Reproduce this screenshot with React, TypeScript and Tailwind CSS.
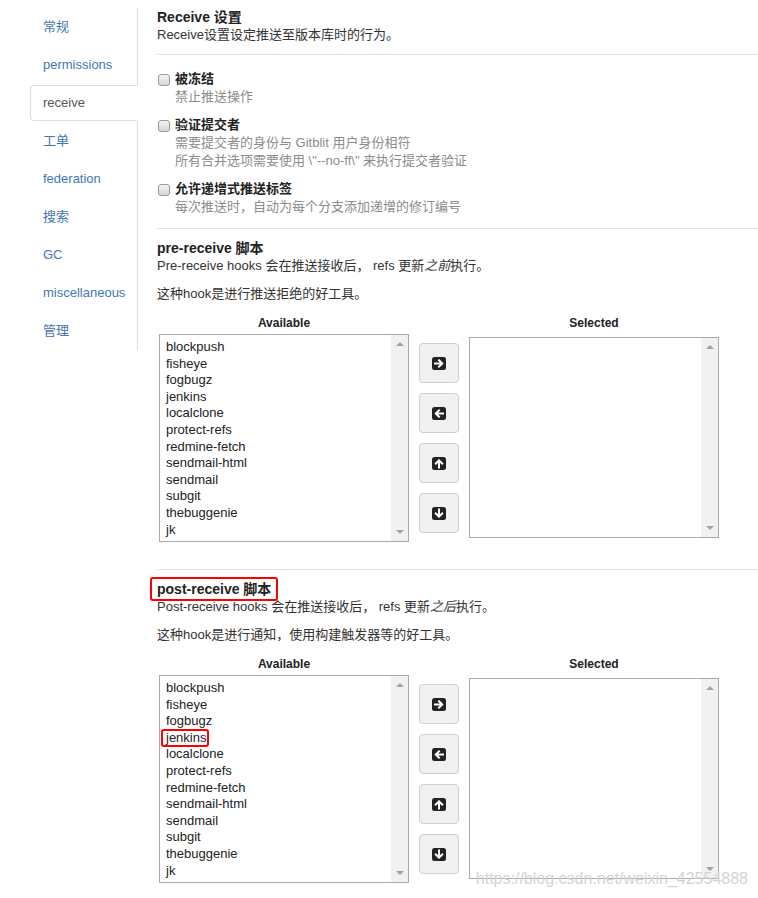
import type { ReactNode } from "react";

const navItems = ["常规", "permissions", "receive", "工单", "federation", "搜索", "GC", "miscellaneous", "管理"];

const hooks = [
  "blockpush",
  "fisheye",
  "fogbugz",
  "jenkins",
  "localclone",
  "protect-refs",
  "redmine-fetch",
  "sendmail-html",
  "sendmail",
  "subgit",
  "thebuggenie",
  "jk",
];

function Checkbox() {
  return (
    <span className="mt-[4px] mr-[5px] ml-px block h-[12px] w-[12px] shrink-0 rounded-[3px] border border-[#9a9a9a] bg-gradient-to-b from-[#f3f3f3] to-[#d6d6d6]" />
  );
}

function CheckOption({ label, children }: { label: string; children: ReactNode }) {
  return (
    <div className="flex">
      <Checkbox />
      <div>
        <div className="text-[13px] leading-[18px] font-bold text-[#222]">{label}</div>
        <div className="text-[13px] leading-[18px] text-[#8c8c8c]">{children}</div>
      </div>
    </div>
  );
}

function Scrollbar() {
  return (
    <div className="flex w-[17px] shrink-0 flex-col items-center justify-between bg-[#f1f1f1] py-[7px]">
      <span className="h-0 w-0 border-x-[4px] border-b-[4px] border-x-transparent border-b-[#a3a3a3]" />
      <span className="h-0 w-0 border-x-[4px] border-t-[4px] border-x-transparent border-t-[#a3a3a3]" />
    </div>
  );
}

function ArrowIcon({ dir }: { dir: "right" | "left" | "up" | "down" }) {
  const rot = { right: 0, down: 90, left: 180, up: 270 }[dir];
  return (
    <svg width="14" height="13" viewBox="0 0 14 13">
      <rect x="0" y="0" width="14" height="13" rx="2.5" fill="#222" />
      <g transform={`rotate(${rot} 7 6.5)`}>
        <path d="M3 6.5H10M7 3.3L10.2 6.5L7 9.7" stroke="#fff" strokeWidth="2" fill="none" strokeLinecap="square" />
      </g>
    </svg>
  );
}

function MoveButton({ dir }: { dir: "right" | "left" | "up" | "down" }) {
  return (
    <button className="flex h-[40px] w-[40px] items-center justify-center rounded-[4px] border border-[#cfcfcf] bg-[#f0f0f0]">
      <ArrowIcon dir={dir} />
    </button>
  );
}

function HookPicker({ markJenkins = false }: { markJenkins?: boolean }) {
  return (
    <div className="mt-[12px] ml-[2px] flex items-start gap-[10px]">
      <div className="w-[250px]">
        <div className="text-center text-[12px] leading-[16px] font-bold text-[#222]">Available</div>
        <div className="mt-[3px] flex h-[208px] border border-[#aaa] bg-white">
          <ul className="flex-1 pt-[4px] pl-[6px] text-[13px] leading-[16.6px] text-[#222]">
            {hooks.map((h) => (
              <li key={h}>
                {markJenkins && h === "jenkins" ? (
                  <span className="relative inline-block">
                    {h}
                    <span className="absolute -top-px -right-[3px] -bottom-px -left-[5px] rounded-[3px] border-2 border-[#f00]" />
                  </span>
                ) : (
                  h
                )}
              </li>
            ))}
          </ul>
          <Scrollbar />
        </div>
      </div>
      <div className="flex flex-col gap-[10px] pt-[28px]">
        <MoveButton dir="right" />
        <MoveButton dir="left" />
        <MoveButton dir="up" />
        <MoveButton dir="down" />
      </div>
      <div className="w-[250px]">
        <div className="text-center text-[12px] leading-[16px] font-bold text-[#222]">Selected</div>
        <div className="mt-[6px] flex h-[201px] border border-[#aaa] bg-white">
          <div className="flex-1" />
          <Scrollbar />
        </div>
      </div>
    </div>
  );
}

export default function App() {
  return (
    <div className="relative flex min-h-[898px] bg-white font-['Liberation_Sans','Microsoft_YaHei','Noto_Sans_CJK_SC',sans-serif] text-[13px] text-[#333]">
      <nav className="w-[138px] shrink-0 pt-2">
        <ul className="ml-[30px] border-r border-[#ddd]">
          {navItems.map((item) => (
            <li key={item} className="h-[38px] py-px">
              <a
                className={
                  item === "receive"
                    ? "-mr-px flex h-[36px] items-center rounded-l-[4px] border border-[#ddd] border-r-white bg-white pl-3 text-[13px] text-[#555]"
                    : "flex h-[36px] items-center border border-transparent pl-3 text-[13px] text-[#4476b3]"
                }
              >
                {item}
              </a>
            </li>
          ))}
        </ul>
      </nav>

      <main className="ml-[19px] flex-1 pt-2">
        <h3 className="text-[14px] leading-[18px] font-bold text-[#222]">Receive 设置</h3>
        <p className="leading-[18px] text-[#333]">Receive设置设定推送至版本库时的行为。</p>
        <hr className="mt-[10px] border-t border-[#e5e5e5]" />

        <div className="mt-[15px] flex flex-col gap-[10px]">
          <CheckOption label="被冻结">禁止推送操作</CheckOption>
          <CheckOption label="验证提交者">
            需要提交者的身份与 Gitblit 用户身份相符
            <br />
            {'所有合并选项需要使用 \\"--no-ff\\" 来执行提交者验证'}
          </CheckOption>
          <CheckOption label="允许递增式推送标签">每次推送时，自动为每个分支添加递增的修订编号</CheckOption>
        </div>
        <hr className="mt-[12px] border-t border-[#e5e5e5]" />

        <section className="mt-[10px]">
          <h4 className="text-[14px] leading-[18px] font-bold text-[#222]">pre-receive 脚本</h4>
          <p className="leading-[18px]">
            Pre-receive hooks 会在推送接收后， refs 更新<em>之前</em>执行。
          </p>
          <p className="mt-[10px] leading-[18px]">这种hook是进行推送拒绝的好工具。</p>
          <HookPicker />
        </section>
        <hr className="mt-[27px] border-t border-[#e5e5e5]" />

        <section className="mt-[10px]">
          <h4 className="text-[14px] leading-[18px] font-bold text-[#222]">
            <span className="relative inline-block">
              post-receive 脚本
              <span className="absolute -top-[3px] -right-[7px] -bottom-[3px] -left-[7px] rounded-[3px] border-2 border-[#f00]" />
            </span>
          </h4>
          <p className="leading-[18px]">
            Post-receive hooks 会在推送接收后， refs 更新<em>之后</em>执行。
          </p>
          <p className="mt-[10px] leading-[18px]">这种hook是进行通知，使用构建触发器等的好工具。</p>
          <HookPicker markJenkins />
        </section>
      </main>

      <span className="pointer-events-none absolute top-[869px] right-[10px] text-[16px] leading-[20px] text-[#d4d4d4]">
        https://blog.csdn.net/weixin_42554888
      </span>
    </div>
  );
}
